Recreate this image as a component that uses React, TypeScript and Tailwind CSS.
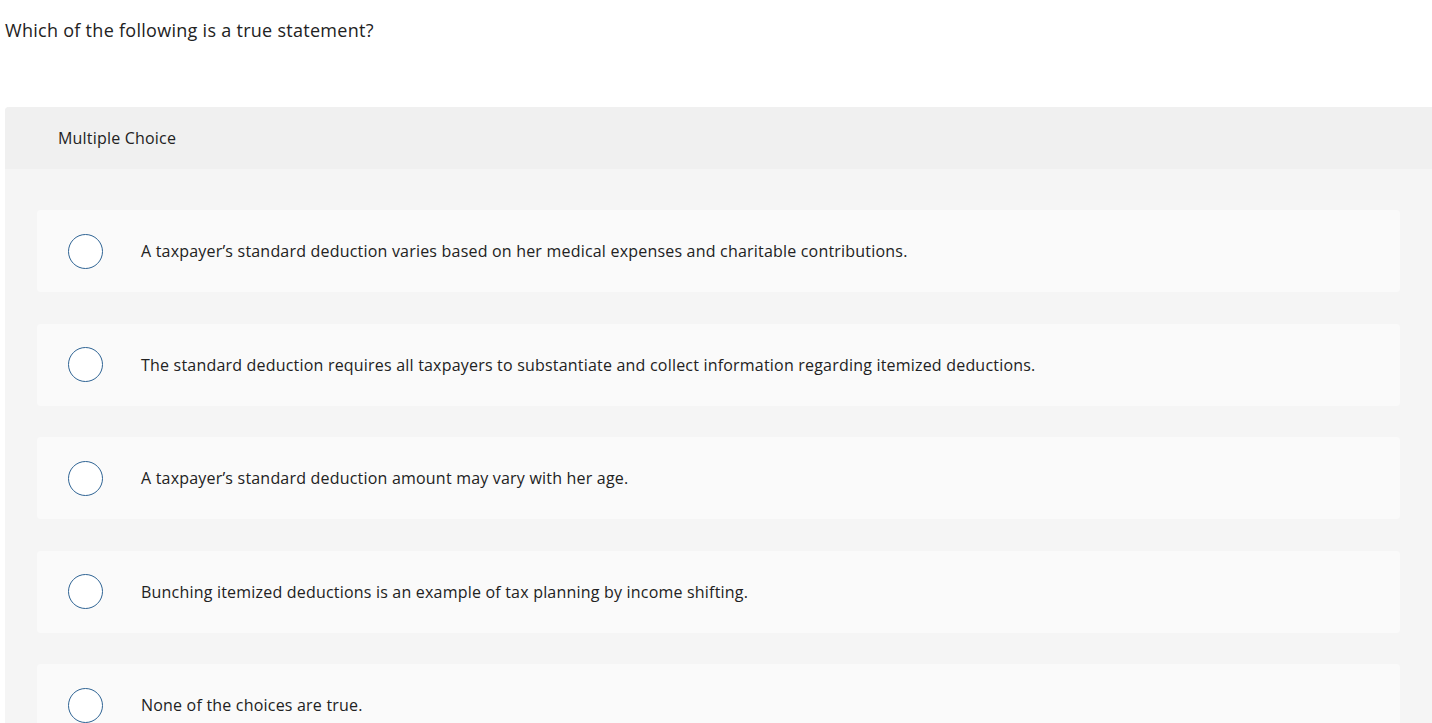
import React from "react";

const options = [
  "A taxpayer\u2019s standard deduction varies based on her medical expenses and charitable contributions.",
  "The standard deduction requires all taxpayers to substantiate and collect information regarding itemized deductions.",
  "A taxpayer\u2019s standard deduction amount may vary with her age.",
  "Bunching itemized deductions is an example of tax planning by income shifting.",
  "None of the choices are true.",
];

export default function App() {
  return (
    <div
      className="w-[1432px] h-[723px] overflow-hidden bg-white text-[#222]"
      style={{ fontFamily: "'Open Sans', Lato, sans-serif" }}
    >
      <div className="pl-[5px] pt-[17px] text-[18px] leading-[26px] tracking-[0.28px] text-[#222]">
        Which of the following is a true statement?
      </div>
      <div className="ml-[5px] mt-[64px] rounded-tl-[4px] bg-[#f5f5f5]">
        <div className="h-[62px] flex items-center pl-[53px] bg-[#f0f0f0] text-[16px] tracking-[0.2px] text-[#222] rounded-tl-[4px]">
          Multiple Choice
        </div>
        <div className="pt-[41px] px-[32px] flex flex-col gap-[31.5px] pb-[40px]">
          {options.map((o, i) => (
            <div
              key={i}
              className="h-[82px] rounded-[4px] bg-[#fafafa] flex items-center pl-[31px]"
            >
              <div className="w-[35px] h-[35px] rounded-full border-[1.5px] border-[#2f6494] bg-white shrink-0" />
              <div className="ml-[38px] text-[16px] tracking-[0.2px] text-[#222]">{o}</div>
            </div>
          ))}
        </div>
      </div>
    </div>
  );
}
